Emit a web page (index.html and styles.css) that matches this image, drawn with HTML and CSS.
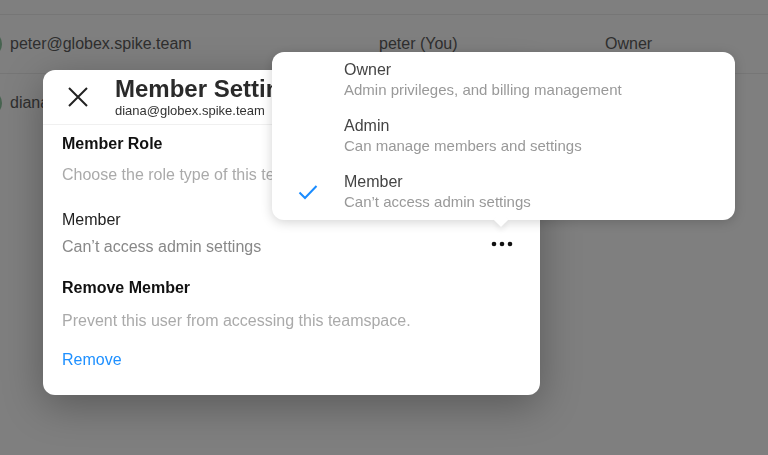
FILE: index.html
```html
<!DOCTYPE html>
<html lang="en">
<head>
    <meta charset="UTF-8">
    <meta name="viewport" content="width=device-width, initial-scale=1.0">
    <title>Member Settings</title>
    <link rel="stylesheet" href="styles.css">
</head>
<body>
    <div class="members">
        <div class="member-row">
            <span class="avatar"></span>
            <span class="col-email">peter@globex.spike.team</span>
            <span class="col-name">peter (You)</span>
            <span class="col-role">Owner</span>
        </div>
        <div class="member-row">
            <span class="avatar"></span>
            <span class="col-email">diana@globex.spike.team</span>
            <span class="col-name">diana</span>
            <span class="col-role">Member</span>
        </div>
    </div>

    <div class="overlay"></div>

    <div class="modal">
        <div class="modal-header">
            <button class="close-btn">
                <svg width="20" height="20" viewBox="0 0 20 20">
                    <path d="M1 1 L19 19 M19 1 L1 19" stroke="#222" stroke-width="2" fill="none"/>
                </svg>
            </button>
            <div class="modal-title">
                <h1>Member Settings</h1>
                <div class="modal-email">diana@globex.spike.team</div>
            </div>
        </div>
        <div class="modal-body">
            <h2 class="section-title">Member Role</h2>
            <p class="section-text">Choose the role type of this teamspace member.</p>
            <div class="role-row">
                <div>
                    <div class="role-name">Member</div>
                    <div class="role-desc">Can’t access admin settings</div>
                </div>
                <button class="more-btn">
                    <svg width="22" height="6" viewBox="0 0 22 6">
                        <circle cx="3" cy="3" r="2.3" fill="#111"/>
                        <circle cx="11" cy="3" r="2.3" fill="#111"/>
                        <circle cx="19" cy="3" r="2.3" fill="#111"/>
                    </svg>
                </button>
            </div>
            <h2 class="section-title remove-title">Remove Member</h2>
            <p class="section-text remove-text">Prevent this user from accessing this teamspace.</p>
            <a class="remove-link" href="#">Remove</a>
        </div>
    </div>

    <div class="role-menu">
        <div class="role-option">
            <div class="check-col"></div>
            <div>
                <div class="option-name">Owner</div>
                <div class="option-desc">Admin privileges, and billing management</div>
            </div>
        </div>
        <div class="role-option">
            <div class="check-col"></div>
            <div>
                <div class="option-name">Admin</div>
                <div class="option-desc">Can manage members and settings</div>
            </div>
        </div>
        <div class="role-option">
            <div class="check-col">
                <svg width="20" height="16" viewBox="0 0 20 16">
                    <polyline points="1.5,8.5 7,14 18.5,2" stroke="#1a8cff" stroke-width="2" fill="none"/>
                </svg>
            </div>
            <div>
                <div class="option-name">Member</div>
                <div class="option-desc">Can’t access admin settings</div>
            </div>
        </div>
        <span class="menu-arrow"></span>
    </div>
</body>
</html>
```

FILE: styles.css
```css
body {
    margin: 0;
    font-family: "Liberation Sans", Arial, sans-serif;
    background-color: #ffffff;
    overflow: hidden;
    height: 455px;
}
.members {
    padding-top: 14px;
}
.member-row {
    display: flex;
    align-items: center;
    height: 59px;
    border-top: 1px solid #ececec;
    box-sizing: border-box;
    font-size: 16px;
    color: #5e5e5e;
}
.avatar {
    width: 26px;
    height: 26px;
    border-radius: 50%;
    background-color: #8fc7a0;
    margin-left: -24px;
    margin-right: 8px;
}
.col-email {
    width: 369px;
}
.col-name {
    width: 226px;
}
.overlay {
    position: fixed;
    top: 0;
    left: 0;
    width: 100%;
    height: 100%;
    background-color: rgba(0, 0, 0, 0.5);
}
.modal {
    position: absolute;
    left: 43px;
    top: 70px;
    width: 497px;
    height: 325px;
    background-color: #fff;
    border-radius: 12px;
    box-shadow: 0 10px 40px rgba(0, 0, 0, 0.3);
    overflow: hidden;
}
.modal-header {
    display: flex;
    align-items: center;
    height: 55px;
    border-bottom: 1px solid #f0f0f0;
    box-sizing: border-box;
    padding-left: 25px;
    gap: 27px;
}
.close-btn {
    background: none;
    border: none;
    padding: 0;
    width: 20px;
    height: 20px;
    display: flex;
}
.modal-title h1 {
    margin: 0;
    font-size: 24px;
    line-height: 28px;
    font-weight: bold;
    color: #2a2a2a;
    white-space: nowrap;
}
.modal-email {
    font-size: 13px;
    line-height: 16px;
    color: #333;
}
.modal-body {
    padding: 9px 19px 0;
}
.section-title {
    margin: 0;
    font-size: 16px;
    line-height: 20px;
    font-weight: bold;
    color: #111;
}
.section-text {
    margin: 11px 0 0;
    font-size: 16px;
    line-height: 20px;
    color: #aaa;
    white-space: nowrap;
}
.role-row {
    display: flex;
    justify-content: space-between;
    align-items: flex-end;
    margin-top: 25px;
}
.role-name {
    font-size: 16px;
    line-height: 20px;
    color: #222;
}
.role-desc {
    margin-top: 7px;
    font-size: 16px;
    line-height: 20px;
    color: #888;
}
.more-btn {
    background: none;
    border: none;
    padding: 0;
    margin-right: 8px;
    margin-bottom: 3px;
    width: 22px;
    height: 20px;
    display: flex;
    align-items: center;
}
.remove-title {
    margin-top: 21px;
}
.remove-text {
    margin-top: 13px;
}
.remove-link {
    display: block;
    margin-top: 19px;
    font-size: 16px;
    line-height: 20px;
    color: #1e90ff;
    text-decoration: none;
}
.role-menu {
    position: absolute;
    left: 272px;
    top: 52px;
    width: 463px;
    background-color: #fff;
    border-radius: 12px;
    box-shadow: 0 2px 12px rgba(0, 0, 0, 0.18);
}
.role-option {
    display: flex;
    padding: 8px 0;
}
.check-col {
    width: 72px;
    display: flex;
    justify-content: center;
    align-items: center;
}
.option-name {
    font-size: 16px;
    line-height: 20px;
    color: #444;
}
.option-desc {
    font-size: 15px;
    line-height: 20px;
    color: #999;
}
.menu-arrow {
    position: absolute;
    left: 224px;
    bottom: -5px;
    width: 10px;
    height: 10px;
    background-color: #fff;
    transform: rotate(45deg);
    box-shadow: 3px 3px 5px rgba(0, 0, 0, 0.06);
}
```
